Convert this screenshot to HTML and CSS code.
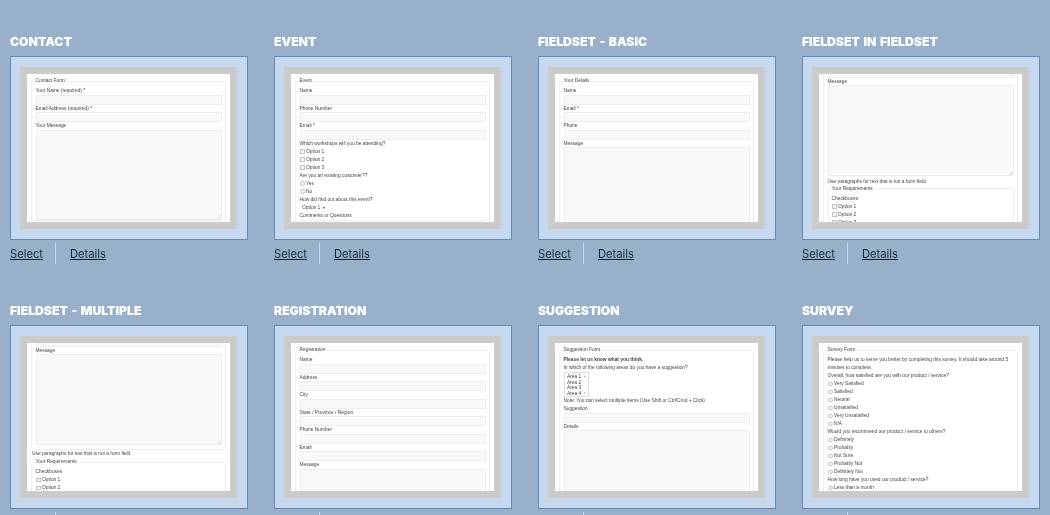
FILE: index.html
```html
<!DOCTYPE html>
<html lang="en">
<head>
    <meta charset="UTF-8">
    <meta name="viewport" content="width=device-width, initial-scale=1.0">
    <title>Form Templates</title>
    <link rel="stylesheet" href="styles.css">
</head>
<body>

    <div class="templates">

        <div class="template">
            <h3>Contact</h3>
            <div class="card"><div class="frame"><div class="shot">
                <fieldset>
                    <legend>Contact Form</legend>
                    <label>Your Name (required) *</label>
                    <input type="text">
                    <label>Email Address (required) *</label>
                    <input type="text">
                    <label>Your Message</label>
                    <div class="area">
                        <svg class="grip" viewBox="0 0 5 5"><path d="M0 5L5 0M2 5L5 2M4 5L5 4"/></svg>
                    </div>
                </fieldset>
            </div></div></div>
            <div class="actions"><a href="#">Select</a><span class="sep"></span><a href="#">Details</a></div>
        </div>

        <div class="template">
            <h3>Event</h3>
            <div class="card"><div class="frame"><div class="shot">
                <fieldset>
                    <legend>Event</legend>
                    <label>Name</label>
                    <input type="text">
                    <label>Phone Number</label>
                    <input type="text">
                    <label>Email *</label>
                    <input type="text">
                    <p>Which workshops will you be attending?</p>
                    <p class="opt"><i class="check"></i>Option 1</p>
                    <p class="opt"><i class="check"></i>Option 2</p>
                    <p class="opt"><i class="check"></i>Option 3</p>
                    <p>Are you an existing customer??</p>
                    <p class="opt"><i class="radio"></i>Yes</p>
                    <p class="opt"><i class="radio"></i>No</p>
                    <p>How did find out about this event?</p>
                    <div class="dropdown">Option 1 <span>&#9662;</span></div>
                    <p>Comments or Questions</p>
                    <input type="text">
                </fieldset>
            </div></div></div>
            <div class="actions"><a href="#">Select</a><span class="sep"></span><a href="#">Details</a></div>
        </div>

        <div class="template">
            <h3>Fieldset - Basic</h3>
            <div class="card"><div class="frame"><div class="shot">
                <fieldset>
                    <legend>Your Details</legend>
                    <label>Name</label>
                    <input type="text">
                    <label>Email *</label>
                    <input type="text">
                    <label>Phone</label>
                    <input type="text">
                    <label>Message</label>
                    <div class="area"></div>
                </fieldset>
            </div></div></div>
            <div class="actions"><a href="#">Select</a><span class="sep"></span><a href="#">Details</a></div>
        </div>

        <div class="template">
            <h3>Fieldset in Fieldset</h3>
            <div class="card"><div class="frame"><div class="shot">
                <fieldset class="scrolled">
                    <input type="text">
                    <label>Message</label>
                    <div class="area">
                        <svg class="grip" viewBox="0 0 5 5"><path d="M0 5L5 0M2 5L5 2M4 5L5 4"/></svg>
                    </div>
                    <p class="note">Use paragraphs for text that is not a form field.</p>
                    <fieldset class="inner">
                        <legend>Your Requirements</legend>
                        <p class="group">Checkboxes</p>
                        <p class="opt"><i class="check"></i>Option 1</p>
                        <p class="opt"><i class="check"></i>Option 2</p>
                        <p class="opt"><i class="check"></i>Option 3</p>
                    </fieldset>
                </fieldset>
            </div></div></div>
            <div class="actions"><a href="#">Select</a><span class="sep"></span><a href="#">Details</a></div>
        </div>

        <div class="template">
            <h3>Fieldset - Multiple</h3>
            <div class="card"><div class="frame"><div class="shot">
                <fieldset class="scrolled first">
                    <input type="text">
                    <label>Message</label>
                    <div class="area">
                        <svg class="grip" viewBox="0 0 5 5"><path d="M0 5L5 0M2 5L5 2M4 5L5 4"/></svg>
                    </div>
                </fieldset>
                <p class="between">Use paragraphs for text that is not a form field.</p>
                <fieldset class="second">
                    <legend>Your Requirements</legend>
                    <p class="group">Checkboxes</p>
                    <p class="opt"><i class="check"></i>Option 1</p>
                    <p class="opt"><i class="check"></i>Option 2</p>
                </fieldset>
            </div></div></div>
            <div class="actions"><a href="#">Select</a><span class="sep"></span><a href="#">Details</a></div>
        </div>

        <div class="template">
            <h3>Registration</h3>
            <div class="card"><div class="frame"><div class="shot">
                <fieldset>
                    <legend>Registration</legend>
                    <label>Name</label>
                    <input type="text">
                    <label>Address</label>
                    <input type="text">
                    <label>City</label>
                    <input type="text">
                    <label>State / Province / Region</label>
                    <input type="text">
                    <label>Phone Number</label>
                    <input type="text">
                    <label>Email</label>
                    <input type="text">
                    <label>Message</label>
                    <div class="area"></div>
                </fieldset>
            </div></div></div>
            <div class="actions"><a href="#">Select</a><span class="sep"></span><a href="#">Details</a></div>
        </div>

        <div class="template">
            <h3>Suggestion</h3>
            <div class="card"><div class="frame"><div class="shot">
                <fieldset>
                    <legend>Suggestion Form</legend>
                    <p><b>Please let us know what you think.</b></p>
                    <p>In which of the following areas do you have a suggestion?</p>
                    <div class="listbox">
                        <div>Area 1<br>Area 2<br>Area 3<br>Area 4</div>
                        <div class="scrollbar"><span>&#9652;</span><span>&#9662;</span></div>
                    </div>
                    <p>Note: You can select multiple items (Use Shift or Ctrl/Cmd + Click)</p>
                    <label>Suggestion</label>
                    <input type="text">
                    <label>Details</label>
                    <div class="area"></div>
                </fieldset>
            </div></div></div>
            <div class="actions"><a href="#">Select</a><span class="sep"></span><a href="#">Details</a></div>
        </div>

        <div class="template">
            <h3>Survey</h3>
            <div class="card"><div class="frame"><div class="shot">
                <fieldset>
                    <legend>Survey Form</legend>
                    <p>Please help us to serve you better by completing this survey. It should take around 5 minutes to complete.</p>
                    <p>Overall, how satisfied are you with our product / service?</p>
                    <p class="opt"><i class="radio"></i>Very Satisfied</p>
                    <p class="opt"><i class="radio"></i>Satisfied</p>
                    <p class="opt"><i class="radio"></i>Neutral</p>
                    <p class="opt"><i class="radio"></i>Unsatisfied</p>
                    <p class="opt"><i class="radio"></i>Very Unsatisfied</p>
                    <p class="opt"><i class="radio"></i>N/A</p>
                    <p>Would you recommend our product / service to others?</p>
                    <p class="opt"><i class="radio"></i>Definitely</p>
                    <p class="opt"><i class="radio"></i>Probably</p>
                    <p class="opt"><i class="radio"></i>Not Sure</p>
                    <p class="opt"><i class="radio"></i>Probably Not</p>
                    <p class="opt"><i class="radio"></i>Definitely Not</p>
                    <p>How long have you used our product / service?</p>
                    <p class="opt"><i class="radio"></i>Less than a month</p>
                </fieldset>
            </div></div></div>
            <div class="actions"><a href="#">Select</a><span class="sep"></span><a href="#">Details</a></div>
        </div>

    </div>

</body>
</html>
```

FILE: styles.css
```css
html, body {
    height: 100%;
}

body {
    margin: 0;
    overflow: hidden;
    background-color: #98b0c9;
    font-family: Inter, "Liberation Sans", sans-serif;
}

.templates {
    display: grid;
    grid-template-columns: repeat(4, 238px);
    column-gap: 26px;
    row-gap: 39px;
    padding: 34px 10px 0;
    filter: blur(0.35px);
}

h3 {
    margin: 0 0 6px;
    height: 16px;
    line-height: 16px;
    font-size: 12.2px;
    font-weight: 900;
    word-spacing: 1.2px;
    text-transform: uppercase;
    white-space: nowrap;
    color: #fff;
}

.card {
    height: 184px;
    box-sizing: border-box;
    padding: 10px 10px 10px 9px;
    background-color: #c6d8ed;
    border: 1px solid #5f8db8;
}

.frame {
    height: 162px;
    box-sizing: border-box;
    padding: 7px;
    background-color: #cbcbcb;
}

.actions {
    display: flex;
    margin-top: 3px;
    height: 21px;
    align-items: center;
}

.actions a {
    font-size: 11.2px;
    color: #1b2740;
}

.sep {
    width: 1px;
    height: 21px;
    margin: 0 14px 0 12px;
    background-color: #c6d8ed;
}

/* the little form inside each preview */
.shot {
    height: 148px;
    box-sizing: border-box;
    padding: 4px 4px 0;
    overflow: hidden;
    background-color: #fff;
    font-family: "Liberation Sans", Arial, sans-serif;
    font-size: 4.85px;
    line-height: 8px;
    color: #444;
    filter: blur(0.25px);
}

fieldset {
    margin: 0;
    min-width: 0;
    padding: 3px 3.5px 0;
    border: 1px solid #eee;
}

legend {
    padding: 0 1px 0 0;
    line-height: 6px;
}

label, p {
    display: block;
    margin: 0;
}

label {
    height: 7.55px;
    line-height: 7.55px;
}

input[type="text"] {
    display: block;
    width: 100%;
    height: 10px;
    box-sizing: border-box;
    margin: 0;
    padding: 0;
    background-color: #f9f9f9;
    border: 1px solid #eee;
}

.area {
    position: relative;
    height: 90.5px;
    box-sizing: border-box;
    background-color: #f9f9f9;
    border: 1px solid #eee;
}

.grip {
    position: absolute;
    right: 0;
    bottom: 0;
    width: 4px;
    height: 4px;
    fill: none;
    stroke: #bbb;
    stroke-width: 0.5;
}

.opt {
    display: flex;
    align-items: center;
    padding-left: 0.5px;
}

.check, .radio {
    width: 4.5px;
    height: 4.5px;
    box-sizing: border-box;
    margin-right: 1.5px;
    background-color: #f6f6f6;
    border: 0.5px solid #c4c4c4;
}

.radio {
    border-radius: 50%;
}

.dropdown {
    display: flex;
    justify-content: space-between;
    box-sizing: border-box;
    width: 28px;
    height: 7px;
    margin: 0.5px 0;
    padding: 0 2.5px;
    line-height: 7px;
}

.dropdown span {
    font-size: 4px;
}

.listbox {
    display: flex;
    justify-content: space-between;
    width: 25.5px;
    height: 25px;
    box-sizing: border-box;
    padding: 1px 0 1px 2.5px;
    line-height: 5.7px;
    border: 1px solid #ddd;
}

.scrollbar {
    display: flex;
    flex-direction: column;
    justify-content: space-between;
    width: 4.5px;
    font-size: 3px;
    line-height: 4px;
    color: #888;
}

.scrolled {
    margin-top: -8px;
    padding-top: 0;
}

.scrolled > input[type="text"] {
    margin-top: -3.5px;
}

.first {
    padding-bottom: 4.5px;
}

.note {
    margin-top: 2px;
}

.between {
    margin: 0 0 1px 1px;
}

.second, .inner {
    padding-top: 0;
}

.inner {
    padding-left: 3px;
    padding-right: 3px;
}

.group {
    margin-top: 3px;
}
```
